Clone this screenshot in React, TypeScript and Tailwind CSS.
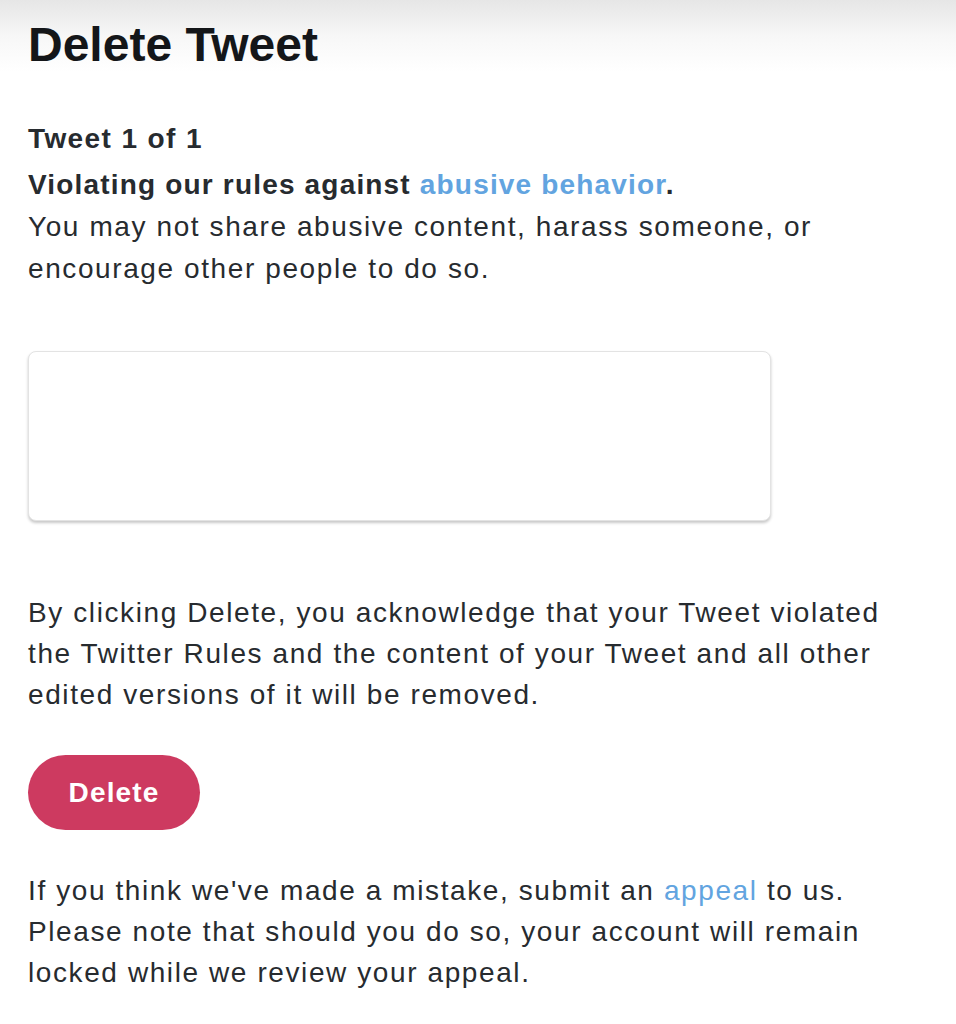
export default function App() {
    return (
        <div className="relative min-h-[1024px] w-full bg-white font-['Liberation_Sans',Arial,sans-serif] text-[#272b2f]">
            {/* shadow falling from the nav bar above */}
            <div className="pointer-events-none absolute inset-x-0 top-0 h-[72px] bg-gradient-to-b from-[#e6e6e6] via-[#f7f7f7] to-transparent" />

            <div className="relative pl-[28px] pt-[17px]">
                <h1 className="text-[48px] font-bold leading-[56px] text-[#141619]">Delete Tweet</h1>

                <div className="mt-[41px] text-[28px] leading-[42px] tracking-[0.057em]">
                    <p className="font-bold leading-[50px] tracking-[0.05em]">Tweet 1 of 1</p>
                    <p className="font-bold tracking-[0.042em]">
                        Violating our rules against <a href="#" className="text-[#62a4e0]">abusive behavior</a>.
                    </p>
                    <p>
                        You may not share abusive content, harass someone, or
                        <br />
                        encourage other people to do so.
                    </p>
                </div>

                <div className="mt-[61px] h-[170px] w-[743px] rounded-lg border border-[#e3e3e3] bg-white shadow-[0_2px_3px_rgba(0,0,0,0.22)]" />

                <p className="mt-[71px] text-[28px] leading-[41px] tracking-[0.057em]">
                    By clicking Delete, you acknowledge that your Tweet violated
                    <br />
                    the Twitter Rules and the content of your Tweet and all other
                    <br />
                    edited versions of it will be removed.
                </p>

                <button className="mt-[40px] flex h-[75px] w-[172px] items-center justify-center rounded-full bg-[#cd3a60] text-[28px] font-bold tracking-[0.04em] text-white">
                    Delete
                </button>

                <p className="mt-[40px] text-[28px] leading-[41px] tracking-[0.057em]">
                    If you think we've made a mistake, submit an <a href="#" className="text-[#62a4e0]">appeal</a> to us.
                    <br />
                    Please note that should you do so, your account will remain
                    <br />
                    locked while we review your appeal.
                </p>
            </div>
        </div>
    );
}
